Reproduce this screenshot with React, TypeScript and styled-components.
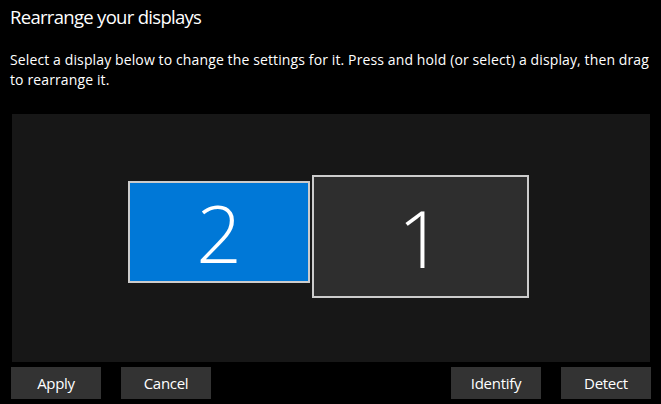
import React from "react"
import styled, { createGlobalStyle } from "styled-components"

const GlobalStyle = createGlobalStyle`
  html, body {
    margin: 0;
    padding: 0;
    background: #000;
  }
  body {
    font-family: "Open Sans", "Noto Sans", sans-serif;
    color: #fff;
  }
`

type Display = {
  id: number
  left: number
  top: number
  width: number
  height: number
  selected?: boolean
}

const displays: Display[] = [
  { id: 2, left: 116, top: 67, width: 182, height: 102, selected: true },
  { id: 1, left: 300, top: 61, width: 217, height: 123 },
]

export default function App() {
  return (
    <>
      <GlobalStyle />
      <Page>
        <Title>Rearrange your displays</Title>
        <Description>
          Select a display below to change the settings for it. Press and hold
          (or select) a display, then drag to rearrange it.
        </Description>

        <Canvas>
          {displays.map((d) => (
            <Monitor
              key={d.id}
              $selected={d.selected}
              style={{ left: d.left, top: d.top, width: d.width, height: d.height }}
            >
              {d.id}
            </Monitor>
          ))}
        </Canvas>

        <Actions>
          <ButtonGroup>
            <Button>Apply</Button>
            <Button>Cancel</Button>
          </ButtonGroup>
          <ButtonGroup>
            <Button>Identify</Button>
            <Button>Detect</Button>
          </ButtonGroup>
        </Actions>
      </Page>
    </>
  )
}

const Page = styled.div`
  width: 661px;
  height: 404px;
  overflow: hidden;
  display: flex;
  flex-direction: column;
`

const Title = styled.h1`
  margin: 0;
  padding: 4px 10px 0;
  font-size: 18.5px;
  font-weight: 400;
  line-height: 26px;
  letter-spacing: -0.7px;
  color: #fff;
`

const Description = styled.p`
  margin: 20px 0 0;
  padding: 0 10px 0 10px;
  font-size: 14px;
  line-height: 20px;
  letter-spacing: 0.12px;
  color: #fff;
`

const Canvas = styled.div`
  position: relative;
  margin: 24px 11px 0 12px;
  height: 248px;
  background: #171717;
`

const Monitor = styled.div<{ $selected?: boolean }>`
  position: absolute;
  box-sizing: border-box;
  display: flex;
  align-items: center;
  justify-content: center;
  border: 2px solid #cccccc;
  background: ${(p) => (p.$selected ? "#0078d7" : "#2e2e2e")};
  color: #fff;
  font-size: 80px;
  font-weight: 300;
  line-height: 1;
`

const Actions = styled.div`
  display: flex;
  justify-content: space-between;
  margin-top: 5px;
  padding: 0 10px 0 11px;
`

const ButtonGroup = styled.div`
  display: flex;
  gap: 20px;
`

const Button = styled.button`
  width: 90px;
  height: 32px;
  border: none;
  background: #333333;
  color: #fff;
  font-family: "Open Sans", "Noto Sans", sans-serif;
  font-size: 15px;
  letter-spacing: -0.3px;
  padding: 0;
  cursor: pointer;
`
